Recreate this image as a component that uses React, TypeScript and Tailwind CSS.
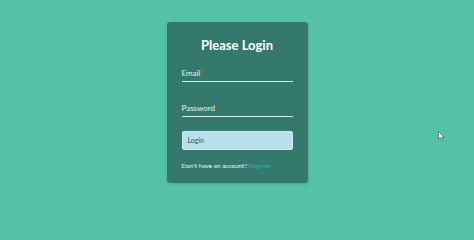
export default function App() {
  return (
    <div className="relative flex min-h-screen w-full justify-center bg-[#55c1a9] pt-[22px] font-['Lato',sans-serif]">
      <div className="flex h-[161px] w-[141px] flex-col rounded-[3px] bg-[#34796b] px-[15px] pt-[15px] shadow-[0_1px_3px_rgba(0,0,0,0.15)]">
        <h1 className="text-center text-[13px] font-bold leading-[16px] text-white">Please Login</h1>

        <div className="mt-[15px] flex flex-col">
          <label className="text-[8px] leading-[10px] text-[#e8f4f1]">Email</label>
          <div className="mt-[3px] border-b-[1.5px] border-[#d9efe9]" />
        </div>

        <div className="mt-[21px] flex flex-col">
          <label className="text-[8px] leading-[10px] text-[#e8f4f1]">Password</label>
          <div className="mt-[3px] border-b-[1.5px] border-[#d9efe9]" />
        </div>

        <button className="mt-[14px] flex h-[19px] items-center rounded-[2px] border border-[#cdebf2] bg-[#b8e0ea] px-[5px] text-[7px] text-[#2d5a55]">
          Login
        </button>

        <p className="mt-[11px] text-[6.5px] leading-[9px] tracking-[-0.05px] text-[#eef7f5]">
          Don't have an account? <span className="text-[#32a9c4]">Register</span>
        </p>
      </div>

      {/* mouse pointer */}
      <svg className="absolute left-[438px] top-[131px]" width="7" height="10" viewBox="0 0 7 10">
        <path d="M0.5 0.5 L0.5 8 L2.3 6.4 L3.6 9.3 L4.8 8.8 L3.6 6 L6 6 Z" fill="#fff" stroke="#2a4a44" strokeWidth="0.6" />
      </svg>
    </div>
  )
}
